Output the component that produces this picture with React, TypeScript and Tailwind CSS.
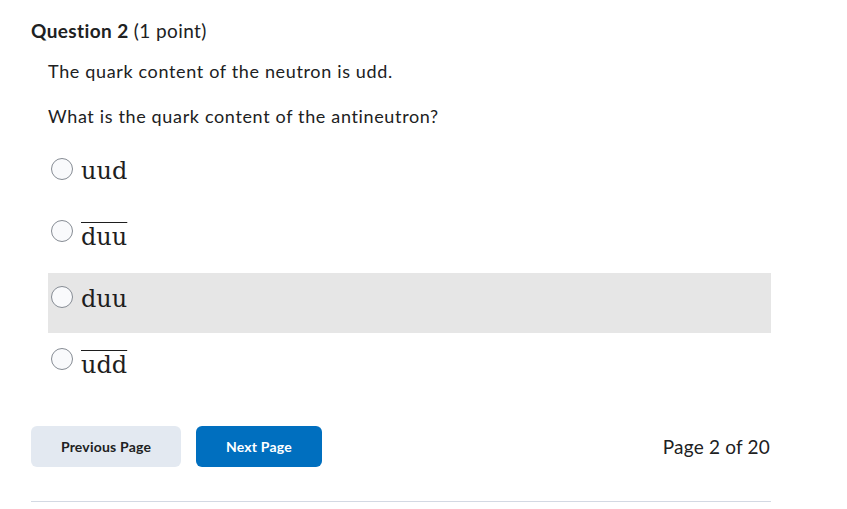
import React from "react";

type Choice = { label: string; bar?: boolean; hover?: boolean };

const choices: Choice[] = [
  { label: "uud" },
  { label: "duu", bar: true },
  { label: "duu", hover: true },
  { label: "udd", bar: true },
];

function Radio() {
  return (
    <span className="mt-[4px] block h-[22px] w-[22px] shrink-0 rounded-full border border-[#868c94] bg-[#f9fafc]" />
  );
}

export default function App() {
  return (
    <div className="min-h-[509px] bg-white pl-[31px] text-[#202122] [font-family:Lato,'Noto_Sans',sans-serif]">
      <div className="w-[740px] pt-[19px]">
        <h2 className="text-[19px] leading-[24px] tracking-[0.4px]">
          <span className="font-bold">Question 2</span> (1 point)
        </h2>

        <div className="pl-[17px]">
          <p className="mt-[16px] text-[18px] leading-[24px] tracking-[0.65px]">
            The quark content of the neutron is udd.
          </p>
          <p className="mt-[21px] text-[18px] leading-[24px] tracking-[0.65px]">
            What is the quark content of the antineutron?
          </p>

          <div className="mt-[17px] flex w-[723px] flex-col gap-[2px]">
            {choices.map((c, i) => (
              <div
                key={i}
                className={
                  "flex items-start gap-[8px] pl-[3px] pt-[9px] " +
                  (c.bar ? "h-[64px] " : "h-[60px] ") +
                  (c.hover ? "bg-[#e6e6e6]" : "")
                }
              >
                <Radio />
                <div
                  className={
                    "text-[24px] leading-[34px] text-[#1e1e1e] [font-family:'DejaVu_Serif',serif] " +
                    (c.bar ? "pt-[4px]" : "")
                  }
                >
                  <span className={c.bar ? "overline decoration-1" : ""}>{c.label}</span>
                </div>
              </div>
            ))}
          </div>
        </div>

        <div className="mt-[27px] flex items-center">
          <button className="h-[41px] w-[150px] rounded-[6px] bg-[#e3e9f1] text-[14px] font-bold tracking-[0.2px] text-[#202122]">
            Previous Page
          </button>
          <button className="ml-[15px] h-[41px] w-[126px] rounded-[6px] bg-[#006fbf] text-[14px] font-bold tracking-[0.2px] text-white">
            Next Page
          </button>
          <span className="ml-auto mr-[1px] text-[19px] leading-[24px] tracking-[0.2px]">Page 2 of 20</span>
        </div>

        <div className="mt-[34px] h-px w-[740px] bg-[#d3d9e3]" />
      </div>
    </div>
  );
}
